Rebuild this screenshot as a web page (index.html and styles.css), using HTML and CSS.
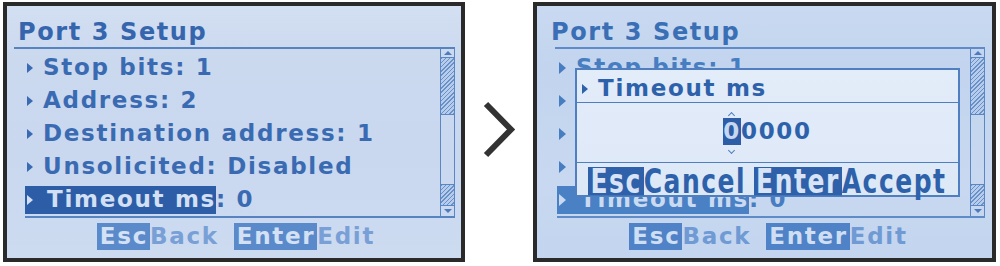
FILE: index.html
```html
<!DOCTYPE html>
<html>
<head>
<meta charset="utf-8">
<link rel="stylesheet" href="styles.css">
</head>
<body>
<div class="page">
  <div class="screen screen-a">
    <div class="title">Port 3 Setup</div>
    <div class="list">
      <div class="list-inner">
        <div class="rows">
          <div class="row"><span class="item"><i class="tri"></i>Stop bits: 1</span></div>
          <div class="row"><span class="item"><i class="tri"></i>Address: 2</span></div>
          <div class="row"><span class="item"><i class="tri"></i>Destination address: 1</span></div>
          <div class="row"><span class="item"><i class="tri"></i>Unsolicited: Disabled</span></div>
          <div class="row"><span class="item sel"><i class="tri"></i>Timeout ms</span><span class="val">: 0</span></div>
        </div>
        <div class="sb">
          <div class="sb-up"><i class="up"></i></div>
          <div class="sb-thumb"></div>
          <div class="sb-gap"></div>
          <div class="sb-thumb2"></div>
          <div class="sb-down"><i class="down"></i></div>
        </div>
      </div>
    </div>
    <div class="foot"><span class="key">Esc</span><span>Back</span><span class="key key2">Enter</span><span>Edit</span></div>
  </div>

  <div class="mid">
    <svg width="68" height="260" viewBox="0 0 68 260"><polyline points="21,102 46,127.5 21,153" fill="none" stroke="#333333" stroke-width="6"/></svg>
  </div>

  <div class="screen screen-b">
    <div class="title">Port 3 Setup</div>
    <div class="list">
      <div class="list-inner">
        <div class="rows">
          <div class="row"><span class="item"><i class="tri"></i>Stop bits: 1</span></div>
          <div class="row"><span class="item"><i class="tri"></i></span></div>
          <div class="row"><span class="item"><i class="tri"></i></span></div>
          <div class="row"><span class="item"><i class="tri"></i></span></div>
          <div class="row"><span class="item sel"><i class="tri"></i>Timeout ms</span><span class="val">: 0</span></div>
        </div>
        <div class="sb">
          <div class="sb-up"><i class="up"></i></div>
          <div class="sb-thumb"></div>
          <div class="sb-gap"></div>
          <div class="sb-thumb2"></div>
          <div class="sb-down"><i class="down"></i></div>
        </div>
      </div>
    </div>
    <div class="foot"><span class="key">Esc</span><span>Back</span><span class="key key2">Enter</span><span>Edit</span></div>

    <div class="dlg">
      <div class="dlg-title"><i class="tri"></i>Timeout ms</div>
      <div class="dlg-value"><span class="cur">0</span><span>0000</span></div>
      <div class="dlg-btns">
        <div class="btns-inner"><span class="bkey">Esc</span><span>Cancel</span><span class="bkey bkey2">Enter</span><span>Accept</span></div>
      </div>
    </div>
  </div>
</div>
</body>
</html>
```
FILE: styles.css
```css
* { box-sizing: border-box; }
html, body { margin: 0; padding: 0; background: #ffffff; }
body {
  font-family: "DejaVu Sans", "Verdana", sans-serif;
  font-weight: bold;
}
.page {
  display: flex;
  width: 1000px;
  height: 266px;
  padding: 2px 0 0 3px;
}
.screen {
  position: relative;
  height: 260px;
  border: 4px solid #2a2a2a;
  display: flex;
  flex-direction: column;
  padding: 0 6px 0 7px;
  font-size: 23px;
  letter-spacing: 1.7px;
  white-space: nowrap;
  overflow: hidden;
}
.screen-a {
  width: 462px;
  background: linear-gradient(180deg, #d3dff2 0%, #cbd9ef 20%, #c9d8ef 60%, #cddbf1 100%);
  color: #3a6bb2;
}
.screen-b {
  width: 463px;
  padding: 0 7px 0 18px;
  background: linear-gradient(180deg, #c9d9f1 0%, #c2d4ee 25%, #c8d8f0 70%, #c3d5ef 100%);
  color: #477dc1;
}
.title {
  height: 41px;
  font-size: 24px;
  letter-spacing: 1.6px;
  line-height: 27px;
  padding: 13px 0 1px 4px;
  color: #3565ad;
}
.screen-b .title { padding-left: 0; margin-left: -4px; color: #3a6fb5; }

.list {
  border-top: 2px solid #5783c1;
  padding-left: 11px;
}
.screen-b .list { padding-left: 0; border-top-color: #5f8cc8; }
.list-inner {
  display: flex;
  height: 169px;
  border-bottom: 2px solid #5783c1;
}
.screen-b .list-inner { border-bottom-color: #5f8cc8; margin-left: 2px; }
.rows {
  flex: 1;
  padding-top: 2px;
}
.row {
  height: 33px;
  display: flex;
  align-items: center;
  line-height: 27px;
}
.item {
  display: inline-flex;
  align-items: center;
  height: 28px;
  padding-left: 2px;
}
.tri {
  display: block;
  width: 0;
  height: 0;
  border-left: 6px solid currentColor;
  border-top: 5px solid transparent;
  border-bottom: 5px solid transparent;
  margin-right: 10px;
}
.screen-b .tri { border-left-width: 7px; border-top-width: 6px; border-bottom-width: 6px; }
.sel {
  background: #2d5da7;
  color: #d3e0f4;
}
.sel .tri { margin-right: 14px; }
.screen-b .sel { background: #4a80c4; color: #c9daf1; }

.sb {
  width: 15px;
  border-left: 1px solid #5a86c4;
  border-right: 1px solid #5a86c4;
  display: flex;
  flex-direction: column;
}
.sb-up {
  height: 8px;
  display: flex;
  justify-content: center;
  align-items: center;
}
.up {
  display: block;
  width: 0; height: 0;
  border-bottom: 4px solid #4d7bbd;
  border-left: 4px solid transparent;
  border-right: 4px solid transparent;
}
.down {
  display: block;
  width: 0; height: 0;
  border-top: 4px solid #4d7bbd;
  border-left: 4px solid transparent;
  border-right: 4px solid transparent;
}
.sb-thumb, .sb-thumb2 {
  background-color: #b7cbea;
  background-image: repeating-linear-gradient(135deg, #6890c9 0 1px, transparent 1px 3px);
}
.sb-thumb {
  height: 58px;
  border-top: 1px solid #5a86c4;
  border-bottom: 1px solid #5a86c4;
}
.sb-gap { flex: 1; }
.sb-thumb2 {
  height: 21px;
  border-top: 1px solid #5a86c4;
}
.sb-down {
  flex: 0 0 11px;
  display: flex;
  justify-content: center;
  align-items: center;
  border-top: 1px solid #5a86c4;
}

.foot {
  flex: 1;
  display: flex;
  justify-content: center;
  align-items: flex-start;
  padding: 5px 0 0 3px;
  line-height: 27px;
  color: #79a0d6;
}
.screen-b .foot { padding: 5px 3px 0 0; color: #6f9ad4; }
.key {
  background: #5b8acb;
  color: #d4e1f4;
  padding: 0 2px 0 3px;
}
.screen-b .key { background: #4f82c6; color: #cfdff3; }
.key2 { margin-left: 15px; }

.mid {
  width: 68px;
  flex: 0 0 68px;
}
.mid svg { display: block; }

.dlg {
  position: absolute;
  left: 38px;
  top: 62px;
  width: 385px;
  height: 129px;
  border: 2px solid #4f7fc0;
  background: linear-gradient(180deg, #e3ecf9 0%, #dde8f7 100%);
  color: #2d62ab;
  display: flex;
  flex-direction: column;
}
.dlg-title {
  height: 33px;
  display: flex;
  align-items: center;
  padding: 5px 0 0 5px;
  border-bottom: 1px solid #4f7fc0;
  line-height: 27px;
}
.dlg .dlg-title .tri { margin-right: 10px; border-left-width: 6px; border-top-width: 5px; border-bottom-width: 5px; }
.dlg-value {
  height: 60px;
  display: flex;
  justify-content: center;
  align-items: flex-start;
  padding-top: 15px;
  line-height: 27px;
  border-bottom: 1px solid #4f7fc0;
}
.cur {
  position: relative;
  background: #2d5da7;
  color: #c6d7f0;
}
.cur::before, .cur::after {
  content: "";
  position: absolute;
  left: 6px;
  width: 4px;
  height: 4px;
  border-left: 1px solid #4f7fc0;
  border-top: 1px solid #4f7fc0;
}
.cur::before { top: -5px; transform: rotate(45deg); }
.cur::after { bottom: -8px; transform: rotate(225deg); }
.dlg-btns {
  flex: 1;
  padding-top: 4px;
}
.btns-inner {
  display: flex;
  justify-content: center;
  font-size: 25px;
  letter-spacing: 1.5px;
  line-height: 21px;
  transform: scaleY(1.35);
  transform-origin: top;
}
.bkey {
  background: #2f60aa;
  color: #d8e4f6;
  padding: 0 2px 0 2px;
}
.bkey2 { margin-left: 8px; }
```
